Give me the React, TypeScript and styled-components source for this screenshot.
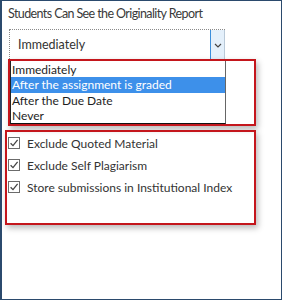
import React from 'react';
import styled, { createGlobalStyle } from 'styled-components';

const GlobalStyle = createGlobalStyle`
  html, body {
    margin: 0;
    padding: 0;
    background: #fff;
  }
  body {
    font-family: Lato, 'Liberation Sans', sans-serif;
  }
`;

const Frame = styled.div`
  box-sizing: border-box;
  width: 282px;
  height: 300px;
  background: #fff;
  border: 1px solid #2b4a6d;
  border-left-width: 2px;
  padding: 5px 0 0 6px;
  display: flex;
  flex-direction: column;
`;

const Title = styled.div`
  font-size: 12.5px;
  letter-spacing: -0.6px;
  line-height: 16px;
  color: #3a3a3a;
`;

const Select = styled.div`
  box-sizing: border-box;
  margin: 7px 0 0 1px;
  width: 216px;
  height: 32px;
  display: flex;
  border-top: 1px dotted #8a8a8a;
  border-left: 1px dotted #8a8a8a;
`;

const SelectValue = styled.div`
  flex: 1;
  display: flex;
  align-items: center;
  padding: 0 0 2px 8px;
  font-size: 12.5px;
  color: #333;
`;

const ArrowBox = styled.div`
  width: 13px;
  background: #e4f0fb;
  border-left: 1px solid #3b8edb;
  border-right: 1px solid #b9c9d8;
  display: flex;
  align-items: center;
  justify-content: center;
`;

const Annotation = styled.div<{ $ml: number; $w: number; $h: number }>`
  box-sizing: border-box;
  margin-left: ${p => p.$ml}px;
  width: ${p => p.$w}px;
  height: ${p => p.$h}px;
  border: 2px solid #c4161c;
  box-shadow: 2px 3px 6px rgba(0, 0, 0, 0.28);
`;

const ListBox = styled.div`
  box-sizing: border-box;
  width: 216px;
  height: 63px;
  border-left: 1px solid #222;
  border-right: 1px solid #666;
  border-bottom: 1px solid #111;
  display: flex;
  flex-direction: column;
  padding-top: 1px;
`;

const Option = styled.div<{ $active?: boolean }>`
  height: 15.25px;
  line-height: 16px;
  font-size: 12px;
  padding-left: 1px;
  color: ${p => (p.$active ? '#fff' : '#1e1e1e')};
  background: ${p => (p.$active ? '#3d90ea' : 'transparent')};
  white-space: nowrap;
`;

const CheckList = styled.div`
  display: flex;
  flex-direction: column;
  gap: 8px;
  padding: 4px 0 0 1px;
`;

const CheckRow = styled.label`
  display: flex;
  align-items: center;
  gap: 7px;
  height: 14px;
  font-size: 12px;
  color: #333;
`;

const Check = () => (
  <svg width="12" height="12" viewBox="0 0 12 12">
    <rect x="0.5" y="0.5" width="11" height="11" fill="#fff" stroke="#6b6b6b" />
    <path d="M2.6 6.2 L5 8.6 L9.6 2.8" fill="none" stroke="#444" strokeWidth="1.3" />
  </svg>
);

const Chevron = () => (
  <svg width="8" height="5" viewBox="0 0 8 5">
    <path d="M1 1 L4 4 L7 1" fill="none" stroke="#444" strokeWidth="1.2" />
  </svg>
);

const options = ['Immediately', 'After the assignment is graded', 'After the Due Date', 'Never'];
const checks = ['Exclude Quoted Material', 'Exclude Self Plagiarism', 'Store submissions in Institutional Index'];

const App = () => {
  return (
    <>
      <GlobalStyle />
      <Frame>
        <Title>Students Can See the Originality Report</Title>
        <Select>
          <SelectValue>Immediately</SelectValue>
          <ArrowBox>
            <Chevron />
          </ArrowBox>
        </Select>
        <Annotation $ml={0} $w={248} $h={67} style={{ marginTop: -2 }}>
          <ListBox>
            {options.map((o, i) => (
              <Option key={o} $active={i === 1}>{o}</Option>
            ))}
          </ListBox>
        </Annotation>
        <Annotation $ml={-3} $w={251} $h={95} style={{ marginTop: 4 }}>
          <CheckList>
            {checks.map(c => (
              <CheckRow key={c}>
                <Check />
                {c}
              </CheckRow>
            ))}
          </CheckList>
        </Annotation>
      </Frame>
    </>
  );
};

export default App;
